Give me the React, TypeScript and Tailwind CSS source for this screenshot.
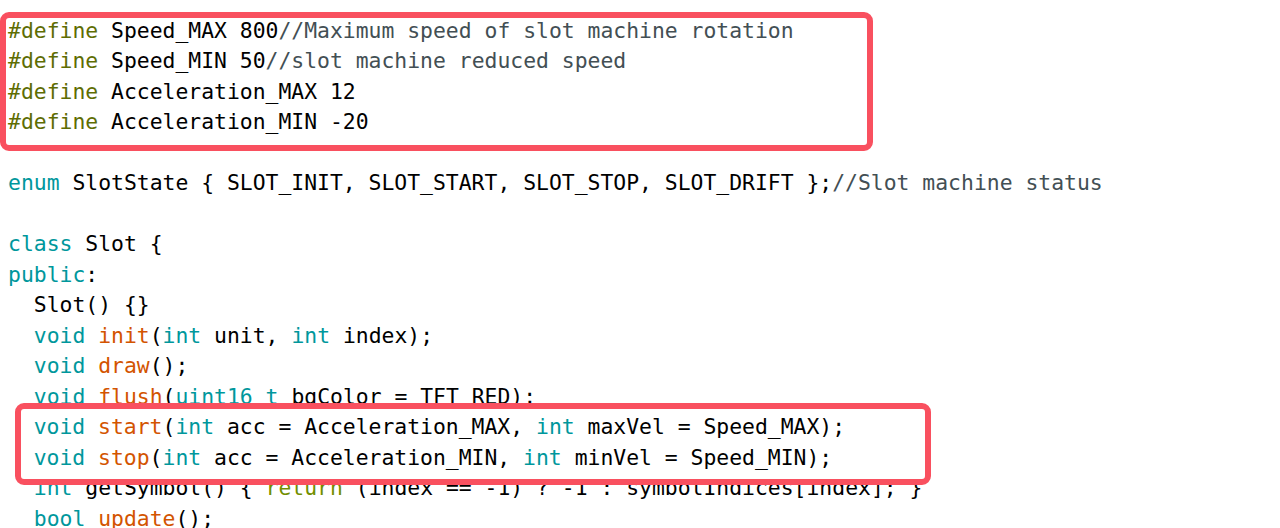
import React from "react";

type Tok = [string, string?];

const C = {
  pre: "text-[#5e6d03]",
  kw: "text-[#00979c]",
  fn: "text-[#d35400]",
  cm: "text-[#434f54]",
  ret: "text-[#728e00]",
};

const Line = ({ toks }: { toks: Tok[] }) => (
  <div className="h-[30.5px] whitespace-pre">
    {toks.map(([t, c], i) => (
      <span key={i} className={c}>
        {t}
      </span>
    ))}
  </div>
);

const defines: Tok[][] = [
  [["#define", C.pre], [" Speed_MAX 800"], ["//Maximum speed of slot machine rotation", C.cm]],
  [["#define", C.pre], [" Speed_MIN 50"], ["//slot machine reduced speed", C.cm]],
  [["#define", C.pre], [" Acceleration_MAX 12"]],
  [["#define", C.pre], [" Acceleration_MIN -20"]],
];

const middle: Tok[][] = [
  [],
  [["enum", C.kw], [" SlotState { SLOT_INIT, SLOT_START, SLOT_STOP, SLOT_DRIFT };"], ["//Slot machine status", C.cm]],
  [],
  [["class", C.kw], [" Slot {"]],
  [["public", C.kw], [":"]],
  [["  Slot() {}"]],
  [["  "], ["void", C.kw], [" "], ["init", C.fn], ["("], ["int", C.kw], [" unit, "], ["int", C.kw], [" index);"]],
  [["  "], ["void", C.kw], [" "], ["draw", C.fn], ["();"]],
  [["  "], ["void", C.kw], [" "], ["flush", C.fn], ["("], ["uint16_t", C.kw], [" bgColor = TFT_RED);"]],
];

const highlighted: Tok[][] = [
  [["void", C.kw], [" "], ["start", C.fn], ["("], ["int", C.kw], [" acc = Acceleration_MAX, "], ["int", C.kw], [" maxVel = Speed_MAX);"]],
  [["void", C.kw], [" "], ["stop", C.fn], ["("], ["int", C.kw], [" acc = Acceleration_MIN, "], ["int", C.kw], [" minVel = Speed_MIN);"]],
];

const tail: Tok[][] = [
  [["  "], ["int", C.kw], [" getSymbol() { "], ["return", C.ret], [" (index == -1) ? -1 : symbolIndices[index]; }"]],
  [["  "], ["bool", C.kw], [" "], ["update", C.fn], ["();"]],
  [["  "], ["bool", C.kw], [" isStopped();"]],
];

export default function App() {
  return (
    <div
      className="h-[528px] w-[1280px] overflow-hidden bg-white pt-[12px] text-[21.4px] leading-[30.5px] text-black"
      style={{ fontFamily: '"DejaVu Sans Mono", "Liberation Mono", monospace' }}
    >
      {/* defines, boxed */}
      <div className="mb-[-13.25px] w-[873px] rounded-[9px] border-[6px] border-[#f9505f] pb-[7.25px] pl-[2px]">
        <div className="-mt-[2.25px]">
          {defines.map((t, i) => (
            <Line key={i} toks={t} />
          ))}
        </div>
      </div>

      <div className="pl-[8px]">
        {middle.map((t, i) => (
          <Line key={i} toks={t} />
        ))}
      </div>

      {/* start / stop, boxed over neighbours */}
      <div className="relative z-10 ml-[15px] mb-[-12px] -mt-[9px] w-[916px] rounded-[9px] border-[6px] border-[#f9505f] bg-white pb-[6px] pl-[12.7px] pt-[3px]">
        {highlighted.map((t, i) => (
          <Line key={i} toks={t} />
        ))}
      </div>

      <div className="pl-[8px]">
        {tail.map((t, i) => (
          <Line key={i} toks={t} />
        ))}
      </div>
    </div>
  );
}
